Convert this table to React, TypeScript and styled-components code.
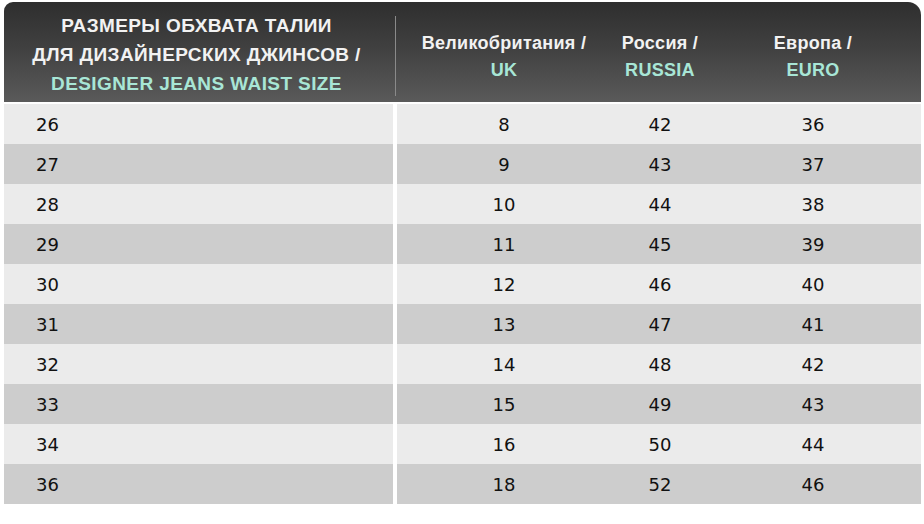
import React from "react";
import styled, { createGlobalStyle } from "styled-components";

const GlobalStyle = createGlobalStyle`
  html, body {
    margin: 0;
    padding: 0;
    background: #ffffff;
  }
`;

const Table = styled.div`
  width: 917px;
  margin: 2px 0 0 4px;
`;

const Header = styled.div`
  display: grid;
  grid-template-columns: 389px 4px 524px;
  height: 100px;
  border-radius: 9px 13px 0 0;
  background: linear-gradient(to bottom, #2e2e2e 0%, #404040 45%, #5a5a5a 100%);
  font-family: "Liberation Sans", Arial, sans-serif;
  font-weight: bold;
  color: #f2f2f2;
  white-space: nowrap;
`;

const TitleCell = styled.div`
  display: flex;
  flex-direction: column;
  align-items: center;
  justify-content: center;
  padding: 5px 4px 0 0;
  font-size: 19px;
  line-height: 29px;
  letter-spacing: 0.4px;
  text-align: center;
`;

const Divider = styled.div`
  display: flex;
  justify-content: center;
  padding: 14px 0 6px;

  &::after {
    content: "";
    width: 1px;
    background: #8a8a8a;
  }
`;

const columns = "156px 156px 150px";

const HeadCols = styled.div`
  display: grid;
  grid-template-columns: ${columns};
  padding-left: 29px;
  align-items: center;
`;

const HeadCell = styled.div`
  display: flex;
  flex-direction: column;
  align-items: center;
  font-size: 18px;
  line-height: 27px;
  letter-spacing: 0.3px;
  padding-top: 9px;
`;

const Accent = styled.span`
  color: #a8e6d6;
`;

const Body = styled.div`
  margin-top: 2px;
  font-family: "DejaVu Sans", Verdana, sans-serif;
  font-size: 18px;
  color: #111111;
`;

const Row = styled.div<{ $shade: boolean }>`
  display: grid;
  grid-template-columns: 389px 524px;
  column-gap: 4px;
  height: 40px;

  & > div {
    background: ${({ $shade }) => ($shade ? "#cdcdcd" : "#ebebeb")};
  }
`;

const Waist = styled.div`
  display: flex;
  align-items: center;
  padding-left: 32px;
`;

const Values = styled.div`
  display: grid;
  grid-template-columns: ${columns};
  padding-left: 29px;
  align-items: center;
`;

const Value = styled.span`
  text-align: center;
`;

const rows: [number, number, number, number][] = [
  [26, 8, 42, 36],
  [27, 9, 43, 37],
  [28, 10, 44, 38],
  [29, 11, 45, 39],
  [30, 12, 46, 40],
  [31, 13, 47, 41],
  [32, 14, 48, 42],
  [33, 15, 49, 43],
  [34, 16, 50, 44],
  [36, 18, 52, 46],
];

export default function App() {
  return (
    <>
      <GlobalStyle />
      <Table>
        <Header>
          <TitleCell>
            <span>РАЗМЕРЫ ОБХВАТА ТАЛИИ</span>
            <span>ДЛЯ ДИЗАЙНЕРСКИХ ДЖИНСОВ /</span>
            <Accent>DESIGNER JEANS WAIST SIZE</Accent>
          </TitleCell>
          <Divider />
          <HeadCols>
            <HeadCell>
              <span>Великобритания /</span>
              <Accent>UK</Accent>
            </HeadCell>
            <HeadCell>
              <span>Россия /</span>
              <Accent>RUSSIA</Accent>
            </HeadCell>
            <HeadCell>
              <span>Европа /</span>
              <Accent>EURO</Accent>
            </HeadCell>
          </HeadCols>
        </Header>
        <Body>
          {rows.map(([waist, uk, ru, eu], i) => (
            <Row key={waist} $shade={i % 2 === 1}>
              <Waist>{waist}</Waist>
              <Values>
                <Value>{uk}</Value>
                <Value>{ru}</Value>
                <Value>{eu}</Value>
              </Values>
            </Row>
          ))}
        </Body>
      </Table>
    </>
  );
}
